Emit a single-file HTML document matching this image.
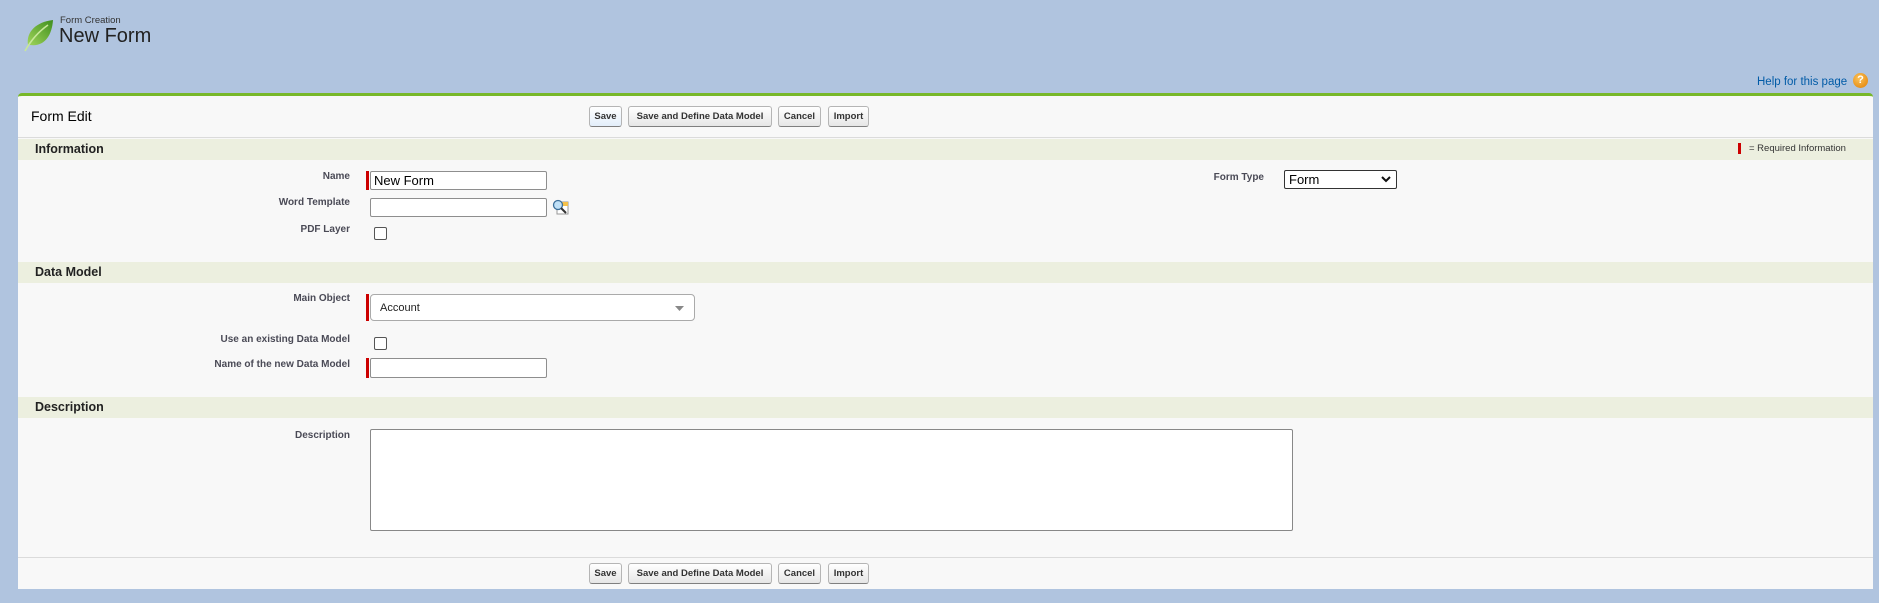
<!DOCTYPE html>
<html><head><meta charset="utf-8"><style>
*{box-sizing:border-box}
body{margin:0;width:1879px;height:603px;background:#b0c4df;font-family:"Liberation Sans",Arial,sans-serif;position:relative;overflow:hidden}
.a{position:absolute}
.lbl{position:absolute;font-size:10px;font-weight:bold;color:#4a4a56;text-align:right;width:300px}
.btn{position:absolute;height:21px;border:1px solid #b5b5b5;border-bottom-color:#7f7f7f;border-radius:3px;background:linear-gradient(#fff,#e6e6e6);font-size:9.5px;font-weight:bold;color:#333;text-align:center;line-height:19px;white-space:nowrap;overflow:hidden}
.band{position:absolute;left:18px;width:1855px;height:21px;background:#ecefdf;font-size:12.5px;font-weight:bold;color:#222;padding-left:17px;line-height:21px}
.inp{position:absolute;background:#fff;border:1px solid #8e8e8e;border-radius:2px}
.req{position:absolute;width:3px;background:#c00}
.cb{position:absolute;width:13px;height:13px;border:1px solid #555;border-radius:2px;background:#fff}
</style></head><body>
<svg class="a" style="left:22px;top:18px" width="34" height="34" viewBox="0 0 34 34">
<defs><linearGradient id="g" x1="0" y1="1" x2="1" y2="0"><stop offset="0" stop-color="#9fd45a"/><stop offset="1" stop-color="#3f8f1e"/></linearGradient></defs>
<path d="M6 27 C4 14 14 4 31 2 C30 18 22 29 8 27 Z" fill="url(#g)"/>
<path d="M3 33 C8 24 16 14 26 7" stroke="#c8e89a" stroke-width="1.6" fill="none"/>
</svg>
<div class="a" style="left:60px;top:15px;font-size:9.5px;color:#333">Form Creation</div>
<div class="a" style="left:59px;top:25px;font-size:20px;color:#222">New Form</div>
<div class="a" style="left:1757px;top:76px;font-size:11.5px;color:#015ba7">Help for this page</div>
<div class="a" style="left:1853px;top:73px;width:15px;height:15px;border-radius:50%;background:radial-gradient(circle at 40% 35%,#fbc35a,#e07d00);color:#fff;font-size:11px;font-weight:bold;text-align:center;line-height:15px">?</div>

<div class="a" style="left:18px;top:93px;width:1855px;height:496px;background:#f8f8f8;border-top:3px solid #78b829;border-radius:4px 4px 0 0"></div>
<div class="a" style="left:31px;top:108px;font-size:14px;color:#000">Form Edit</div>
<div class="a" style="left:18px;top:137px;width:1855px;height:1px;background:#dbdbdb"></div>

<div class="btn" style="left:589px;top:106px;width:33px;background:linear-gradient(#fff,#e3eefa)">Save</div>
<div class="btn" style="left:628px;top:106px;width:144px">Save and Define Data Model</div>
<div class="btn" style="left:778px;top:106px;width:43px">Cancel</div>
<div class="btn" style="left:828px;top:106px;width:41px">Import</div>

<div class="band" style="top:139px">Information</div>
<div class="req" style="left:1738px;top:143px;height:11px"></div>
<div class="a" style="left:1749px;top:143px;font-size:9.5px;color:#333">= Required Information</div>

<div class="lbl" style="left:50px;top:171px">Name</div>
<div class="req" style="left:366px;top:171px;height:19px"></div>
<div class="inp" style="left:370px;top:171px;width:177px;height:19px;font-size:13px;padding-left:3px;line-height:17px">New Form</div>
<div class="lbl" style="left:50px;top:197px">Word Template</div>
<div class="inp" style="left:370px;top:198px;width:177px;height:19px"></div>
<svg class="a" style="left:552px;top:199px" width="17" height="16" viewBox="0 0 17 16"><rect x="5" y="3" width="11" height="12" fill="#fff" stroke="#999"/><rect x="10" y="3" width="6" height="4" fill="#f5c14a"/><circle cx="6" cy="6" r="4.5" fill="#bfe0f7" stroke="#3c6f9a" stroke-width="1.3"/><path d="M9 9 L14 14" stroke="#333" stroke-width="2"/></svg>
<div class="lbl" style="left:50px;top:224px">PDF Layer</div>
<div class="cb" style="left:374px;top:227px"></div>

<div class="lbl" style="left:964px;top:172px">Form Type</div>
<div class="inp" style="left:1284px;top:170px;width:113px;height:19px;border-color:#333;font-size:13px;padding-left:4px;line-height:17px">Form<svg class="a" style="right:5px;top:5px" width="10" height="7" viewBox="0 0 10 7"><path d="M1 1 L5 5 L9 1" stroke="#111" stroke-width="2" fill="none"/></svg></div>

<div class="band" style="top:262px">Data Model</div>
<div class="lbl" style="left:50px;top:293px">Main Object</div>
<div class="req" style="left:366px;top:294px;height:27px"></div>
<div class="inp" style="left:370px;top:294px;width:325px;height:27px;border-color:#aaa;border-radius:4px;font-size:11px;color:#222;padding-left:9px;line-height:26px">Account<svg class="a" style="right:10px;top:11px" width="9" height="6" viewBox="0 0 9 6"><path d="M0 0 L9 0 L4.5 5 Z" fill="#888"/></svg></div>
<div class="lbl" style="left:50px;top:334px">Use an existing Data Model</div>
<div class="cb" style="left:374px;top:337px"></div>
<div class="lbl" style="left:50px;top:359px">Name of the new Data Model</div>
<div class="req" style="left:366px;top:358px;height:20px"></div>
<div class="inp" style="left:370px;top:358px;width:177px;height:20px"></div>

<div class="band" style="top:397px">Description</div>
<div class="lbl" style="left:50px;top:430px">Description</div>
<div class="inp" style="left:370px;top:429px;width:923px;height:102px;border-color:#888"></div>

<div class="a" style="left:18px;top:557px;width:1855px;height:1px;background:#dbdbdb"></div>
<div class="btn" style="left:589px;top:563px;width:33px">Save</div>
<div class="btn" style="left:628px;top:563px;width:144px">Save and Define Data Model</div>
<div class="btn" style="left:778px;top:563px;width:43px">Cancel</div>
<div class="btn" style="left:828px;top:563px;width:41px">Import</div>
</body></html>
